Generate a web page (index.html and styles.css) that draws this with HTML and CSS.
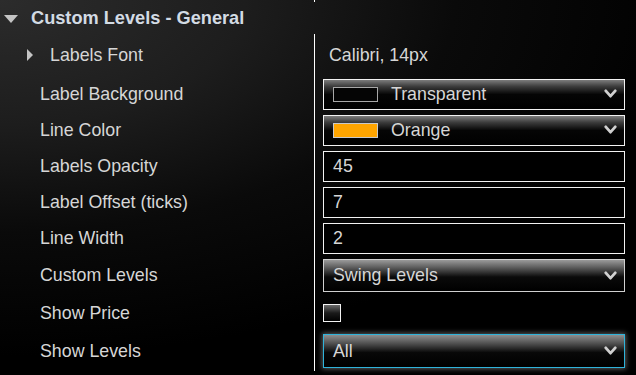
FILE: index.html
```html
<!DOCTYPE html>
<html lang="en">
<head>
    <meta charset="UTF-8">
    <meta name="viewport" content="width=device-width, initial-scale=1.0">
    <title>Custom Levels - General</title>
    <link rel="stylesheet" href="styles.css">
</head>
<body>
    <div class="panel">
        <div class="top-stub"><div></div><div class="value"></div></div>

        <div class="group-header">
            <span class="caret-down"></span>
            <span>Custom Levels - General</span>
        </div>

        <div class="row row-font">
            <div class="label sub"><span class="caret-right"></span>Labels Font</div>
            <div class="value"><span class="plain">Calibri, 14px</span></div>
        </div>

        <div class="row">
            <div class="label">Label Background</div>
            <div class="value">
                <div class="select">
                    <span class="swatch swatch-clear"></span>
                    <span class="select-text">Transparent</span>
                    <svg class="chevron" viewBox="0 0 13 10"><path d="M1.8 1.8 L6.5 7.2 L11.2 1.8" /></svg>
                </div>
            </div>
        </div>

        <div class="row">
            <div class="label">Line Color</div>
            <div class="value">
                <div class="select">
                    <span class="swatch swatch-orange"></span>
                    <span class="select-text">Orange</span>
                    <svg class="chevron" viewBox="0 0 13 10"><path d="M1.8 1.8 L6.5 7.2 L11.2 1.8" /></svg>
                </div>
            </div>
        </div>

        <div class="row">
            <div class="label">Labels Opacity</div>
            <div class="value"><div class="text-input">45</div></div>
        </div>

        <div class="row">
            <div class="label">Label Offset (ticks)</div>
            <div class="value"><div class="text-input">7</div></div>
        </div>

        <div class="row">
            <div class="label">Line Width</div>
            <div class="value"><div class="text-input">2</div></div>
        </div>

        <div class="row row-levels">
            <div class="label">Custom Levels</div>
            <div class="value">
                <div class="select select-soft">
                    <span class="select-text">Swing Levels</span>
                    <svg class="chevron" viewBox="0 0 13 10"><path d="M1.8 1.8 L6.5 7.2 L11.2 1.8" /></svg>
                </div>
            </div>
        </div>

        <div class="row">
            <div class="label">Show Price</div>
            <div class="value"><span class="checkbox"></span></div>
        </div>

        <div class="row row-last">
            <div class="label">Show Levels</div>
            <div class="value">
                <div class="select select-focus">
                    <span class="select-text">All</span>
                    <svg class="chevron" viewBox="0 0 13 10"><path d="M1.8 1.8 L6.5 7.2 L11.2 1.8" /></svg>
                </div>
            </div>
        </div>
    </div>
</body>
</html>
```

FILE: styles.css
```css
html, body {
    margin: 0;
    height: 100%;
}
body {
    font-family: "Liberation Sans", Arial, sans-serif;
    font-size: 17.8px;
    color: #d6d6d6;
    background: radial-gradient(ellipse 110% 95% at 0 0, #2c2c2c 0%, #1d1d1d 35%, #0a0a0a 65%, #000 100%);
    overflow: hidden;
}
.panel {
    display: flex;
    flex-direction: column;
}
.top-stub {
    display: grid;
    grid-template-columns: 314px 1fr;
    height: 2px;
}
.top-stub .value {
    border-left: 1px solid #fff;
}
.group-header {
    height: 32px;
    display: flex;
    align-items: center;
    font-weight: bold;
    font-size: 18.2px;
    color: #d3dbe4;
}
.caret-down {
    width: 0;
    height: 0;
    border-left: 7px solid transparent;
    border-right: 7px solid transparent;
    border-top: 8px solid #c4c4c4;
    margin: 1px 13px 0 4px;
}
.row {
    display: grid;
    grid-template-columns: 314px 1fr;
    height: 36px;
}
.row-font { height: 42px; }
.row-levels { height: 39px; }
.row-last { height: 40px; }
.label {
    display: flex;
    align-items: center;
    padding-left: 40px;
}
.label.sub {
    padding-left: 27px;
}
.caret-right {
    width: 0;
    height: 0;
    border-top: 6px solid transparent;
    border-bottom: 6px solid transparent;
    border-left: 6px solid #c4c4c4;
    margin-right: 17px;
}
.value {
    border-left: 1px solid #fff;
    display: flex;
    align-items: center;
    padding: 0 10px 0 8px;
}
.plain {
    padding-left: 6px;
}
.select, .text-input {
    box-sizing: border-box;
    width: 302px;
    height: 31px;
    border: 1px solid #f2f2f2;
    background: #000;
    display: flex;
    align-items: center;
    padding: 0 7px 0 9px;
    color: #d6d6d6;
}
.select {
    background: linear-gradient(to bottom, #7c7c7c 0%, #3c3c3c 22%, #050505 50%, #000 100%);
}
.select-soft {
    height: 33px;
    border-color: #d0d0d0;
    background: linear-gradient(to bottom, #9a9a9a 0%, #5a5a5a 25%, #0a0a0a 55%, #000 100%);
}
.select-focus {
    height: 34px;
    border-color: #2fb3da;
    box-shadow: 0 0 5px 1px rgba(200, 200, 200, 0.45);
    background: linear-gradient(to bottom, #8e8e8e 0%, #4c4c4c 28%, #080808 55%, #000 100%);
}
.swatch {
    box-sizing: border-box;
    width: 45px;
    height: 15px;
    margin-right: 13px;
    border: 1px solid #a8a8a8;
}
.swatch-clear {
    background: #050505;
}
.swatch-orange {
    background: #ffa500;
    border-color: #c9c9c9;
}
.select-text {
    flex: 1;
}
.chevron {
    width: 13px;
    height: 10px;
    fill: none;
    stroke: #d0d0d0;
    stroke-width: 2.8;
    stroke-linecap: round;
    stroke-linejoin: round;
}
.checkbox {
    box-sizing: border-box;
    width: 18px;
    height: 18px;
    border: 1px solid #f2f2f2;
    background: linear-gradient(to bottom, #6a6a6a 0%, #1a1a1a 50%, #000 100%);
}
```
